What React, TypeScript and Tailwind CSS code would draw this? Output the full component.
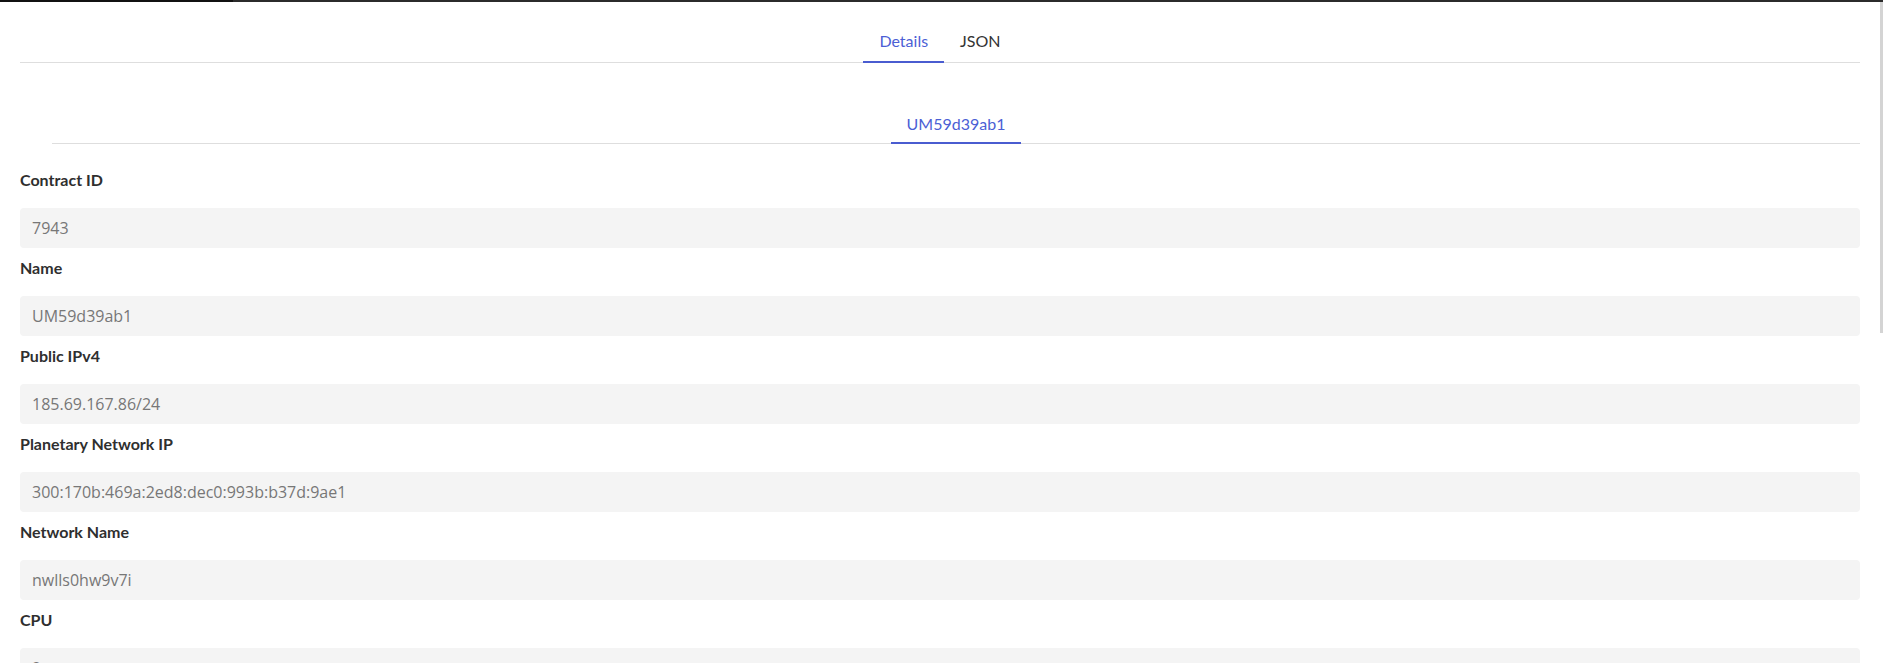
import React from 'react'

const fields = [
  { label: 'Contract ID', value: '7943' },
  { label: 'Name', value: 'UM59d39ab1' },
  { label: 'Public IPv4', value: '185.69.167.86/24' },
  { label: 'Planetary Network IP', value: '300:170b:469a:2ed8:dec0:993b:b37d:9ae1' },
  { label: 'Network Name', value: 'nwlls0hw9v7i' },
  { label: 'CPU', value: '2' },
]

function Tab({ label, active }: { label: string; active?: boolean }) {
  return (
    <button
      type="button"
      className={
        active
          ? 'relative -mb-px px-4 pt-[14px] pb-2 text-base leading-6 text-[#4c5fd5] border-b-2 border-[#4a5cd0]'
          : 'relative -mb-px px-4 pt-[14px] pb-2 text-base leading-6 text-[#333] border-b-2 border-transparent'
      }
    >
      {label}
    </button>
  )
}

export default function App() {
  return (
    <div
      className="relative h-[663px] w-full overflow-hidden bg-white"
      style={{ fontFamily: 'Lato, "Open Sans", sans-serif' }}
    >
      {/* top strip */}
      <div className="flex h-[2px]">
        <div className="w-[233px] bg-[#111]" />
        <div className="flex-1 bg-[#2b2b2b]" />
      </div>

      <div className="pl-5 pr-[23px]">
        <div className="mt-[13px] flex justify-center border-b border-[#dedede]">
          <Tab label="Details" active />
          <Tab label="JSON" />
        </div>

        <div className="ml-8 mt-[35px] flex justify-center border-b border-[#dedede]">
          <button
            type="button"
            className="-mb-px px-4 pt-[14px] pb-[6px] text-base leading-6 text-[#4c5fd5] border-b-2 border-[#4a5cd0]"
          >
            UM59d39ab1
          </button>
        </div>

        <div className="mt-4">
          {fields.map((f) => (
            <div key={f.label} className="pt-[8px]">
              <div className="h-6 text-base font-bold leading-6 text-[#2f2f2f]">{f.label}</div>
              <div
                className="mt-4 flex h-10 items-center rounded-[4px] bg-[#f4f4f4] px-3 text-base text-[#777]"
                style={{ fontFamily: '"Open Sans", "Noto Sans", sans-serif' }}
              >
                {f.value}
              </div>
            </div>
          ))}
        </div>
      </div>

      {/* scrollbar thumb */}
      <div className="absolute right-0 top-[2px] h-[331px] w-[3px] bg-[#d4d4d4]" />
    </div>
  )
}
